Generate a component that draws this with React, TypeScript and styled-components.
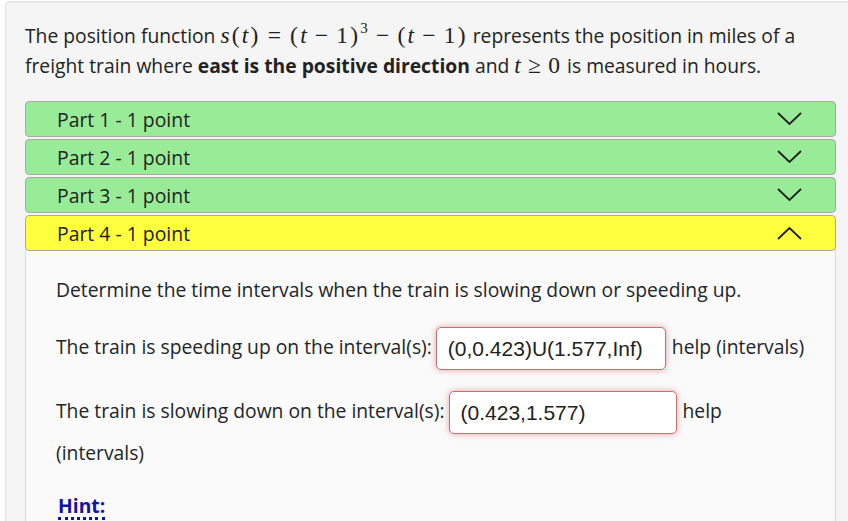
import React from "react";
import styled, { createGlobalStyle } from "styled-components";

const Global = createGlobalStyle`
  html, body { margin: 0; padding: 0; overflow: hidden; background: #ffffff; }
  body { font-family: "Open Sans", "Noto Sans", sans-serif; color: #212529; }
`;

const Page = styled.div`
  padding: 1px 0 0 5px;
  width: 900px;
`;

const Well = styled.div`
  width: 811px;
  padding: 19px;
  background: #f5f5f5;
  border: 1px solid #e3e3e3;
  border-radius: 4px;
  box-shadow: inset 0 1px 1px rgba(0, 0, 0, 0.05);
`;

const Intro = styled.p`
  margin: 0 0 20px 0;
  font-size: 19.3px;
  line-height: 30px;
  color: #222;
`;

const MathSpan = styled.span`
  font-family: "Liberation Serif", "DejaVu Serif", serif;
  font-size: 23.5px;
  line-height: 16px;
  letter-spacing: 2.2px;
  white-space: nowrap;
`;

const Var = styled.i`
  font-style: italic;
`;

const Sup = styled.sup`
  font-size: 15px;
  vertical-align: 10px;
  line-height: 0;
`;

const Op = styled.span<{ $gap: number }>`
  margin: 0 ${(p) => p.$gap}px;
`;

const Accordion = styled.div`
  display: flex;
  flex-direction: column;
  gap: 2px;
`;

const Header = styled.div<{ $bg: string }>`
  display: flex;
  align-items: center;
  justify-content: space-between;
  height: 34px;
  padding: 0 33px 0 31px;
  background: ${(p) => p.$bg};
  border: 1px solid #a9a9a9;
  border-radius: 4px;
  font-size: 19.4px;
  color: #222;
`;

const Panel = styled.div`
  margin-top: -2px;
  background: #fafafa;
  border: 1px solid #dcdcdc;
  border-top: none;
  padding: 27px 30px 0 30px;
  font-size: 19.3px;
  color: #212529;
  height: 300px;
`;

const Para = styled.p`
  margin: 0 0 24px 0;
  line-height: 27px;
`;

const AnswerRow = styled.p`
  margin: 0 0 21px 0;
  line-height: 37px;
`;

const Answer = styled.span<{ $w: number }>`
  display: inline-block;
  box-sizing: border-box;
  width: ${(p) => p.$w}px;
  height: 43px;
  line-height: 41px;
  vertical-align: middle;
  padding: 0 11px;
  margin: 0 6px 0 4px;
  background: #ffffff;
  border: 1px solid #c96f6f;
  border-radius: 5px;
  box-shadow: 0 0 6px rgba(200, 60, 60, 0.45);
  font-family: "Liberation Sans", Arial, sans-serif;
  font-size: 21px;
  color: #222;
`;

const Hint = styled.span`
  display: inline-block;
  margin-left: 2px;
  font-weight: 700;
  color: #1212a4;
  line-height: 22px;
  border-bottom: 3px dotted #1212a4;
`;

const Chevron = ({ up }: { up?: boolean }) => (
  <svg width="25" height="14" viewBox="0 0 25 14" fill="none">
    <polyline
      points={up ? "1,13 12.5,2 24,13" : "1,1 12.5,12 24,1"}
      stroke="#1f1f1f"
      strokeWidth="1.8"
      fill="none"
    />
  </svg>
);

const parts = [
  { label: "Part 1 - 1 point", bg: "#98ec98", open: false },
  { label: "Part 2 - 1 point", bg: "#98ec98", open: false },
  { label: "Part 3 - 1 point", bg: "#98ec98", open: false },
  { label: "Part 4 - 1 point", bg: "#ffff40", open: true },
];

export default function App() {
  return (
    <Page>
      <Global />
      <Well>
        <Intro>
          The position function{" "}
          <MathSpan>
            <Var>s</Var>(<Var>t</Var>)<Op $gap={7}>=</Op>(<Var>t</Var>
            <Op $gap={6}>−</Op>1)<Sup>3</Sup>
            <Op $gap={6}>−</Op>(<Var>t</Var>
            <Op $gap={6}>−</Op>1)
          </MathSpan>{" "}
          represents the position in miles of a freight train where{" "}
          <b>east is the positive direction</b> and{" "}
          <MathSpan>
            <Var>t</Var>
            <Op $gap={5}>≥</Op>0
          </MathSpan>{" "}
          is measured in hours.
        </Intro>
        <Accordion>
          {parts.map((p) => (
            <Header key={p.label} $bg={p.bg}>
              <span>{p.label}</span>
              <Chevron up={p.open} />
            </Header>
          ))}
        </Accordion>
        <Panel>
          <Para>
            Determine the time intervals when the train is slowing down or
            speeding up.
          </Para>
          <AnswerRow>
            The train is speeding up on the interval(s):
            <Answer $w={230}>(0,0.423)U(1.577,Inf)</Answer>
            help (intervals)
          </AnswerRow>
          <AnswerRow>
            The train is slowing down on the interval(s):
            <Answer $w={228}>(0.423,1.577)</Answer>
            help (intervals)
          </AnswerRow>
          <Hint>Hint:</Hint>
        </Panel>
      </Well>
    </Page>
  );
}
